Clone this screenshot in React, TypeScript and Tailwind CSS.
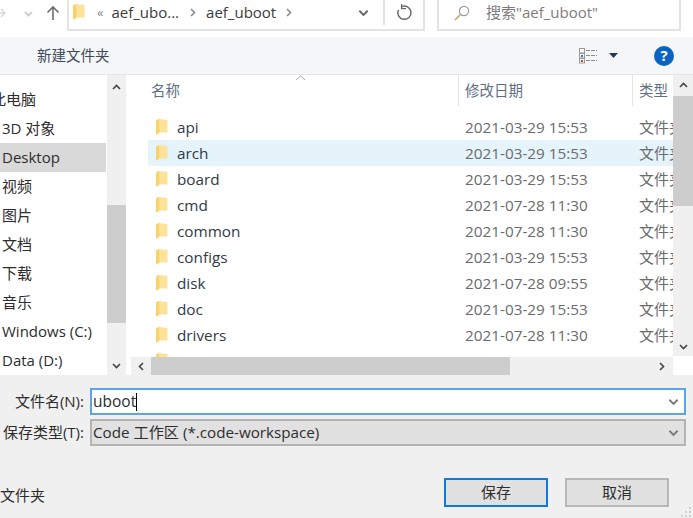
const font = { fontFamily: '"Open Sans", "Noto Sans CJK SC", sans-serif' };

const files = [
  ["api", "2021-03-29 15:53"],
  ["arch", "2021-03-29 15:53"],
  ["board", "2021-03-29 15:53"],
  ["cmd", "2021-07-28 11:30"],
  ["common", "2021-07-28 11:30"],
  ["configs", "2021-03-29 15:53"],
  ["disk", "2021-07-28 09:55"],
  ["doc", "2021-03-29 15:53"],
  ["drivers", "2021-07-28 11:30"],
  ["", ""],
];

const places = ["此电脑", "3D 对象", "Desktop", "视频", "图片", "文档", "下载", "音乐", "Windows (C:)", "Data (D:)"];

function Folder({ className = "" }: { className?: string }) {
  return (
    <svg width="12" height="17" viewBox="0 0 12 17" className={className}>
      <path d="M0 1.5 L3 0 L11.5 1 L11.5 13.5 L3 13.5 L1 15.5 L0 14.5 Z" fill="#fde39a" />
      <path d="M0 1.5 L3 0 L3.5 13.5 L1 15.5 L0 14.5 Z" fill="#f8d26c" />
    </svg>
  );
}

function Chevron({ dir, color = "#555", size = 11 }: { dir: "up" | "down" | "left" | "right"; color?: string; size?: number }) {
  const d = { up: "M2 7 L5.5 3.5 L9 7", down: "M2 4 L5.5 7.5 L9 4", left: "M7 2 L3.5 5.5 L7 9", right: "M4 2 L7.5 5.5 L4 9" }[dir];
  return (
    <svg width={size} height={size} viewBox="0 0 11 11" className="shrink-0">
      <path d={d} fill="none" stroke={color} strokeWidth="1.6" />
    </svg>
  );
}

function TopBar() {
  return (
    <div className="flex h-[37px] shrink-0 items-start bg-white text-[15px] text-[#3c3c3c]">
      {/* nav arrows */}
      <div className="flex h-[26px] w-[67px] shrink-0 items-center">
        <svg width="6" height="14" viewBox="0 0 6 14" className="shrink-0">
          <path d="M0 7 H5 M1 3 L5 7 L1 11" fill="none" stroke="#d8d8d8" strokeWidth="1.4" />
        </svg>
        <div className="ml-[17px]">
          <Chevron dir="down" color="#c4c4c4" />
        </div>
        <svg width="14" height="16" viewBox="0 0 14 16" className="ml-[12px] shrink-0">
          <path d="M7 15 V2 M1.5 7.5 L7 2 L12.5 7.5" fill="none" stroke="#6e6e6e" strokeWidth="1.6" />
        </svg>
      </div>

      {/* address */}
      <div className="flex h-[31px] w-[358px] shrink-0 items-center border-b-2 border-l-2 border-r-2 border-[#e3e3e3] pb-[4px]">
        <div className="ml-[4px] flex w-[24px] shrink-0">
          <Folder />
        </div>
        <span className="text-[13px] leading-none text-[#8a8a8a]">«</span>
        <span className="ml-[8px]">aef_ubo...</span>
        <div className="ml-[8px]">
          <Chevron dir="right" color="#8a8a8a" />
        </div>
        <span className="ml-[8px]">aef_uboot</span>
        <div className="ml-[7px]">
          <Chevron dir="right" color="#8a8a8a" />
        </div>
        <div className="ml-auto mr-[13px]">
          <Chevron dir="down" color="#666" size={13} />
        </div>
        <div className="flex h-full w-[40px] shrink-0 items-center justify-center border-l-2 border-[#e3e3e3]">
          <svg width="17" height="17" viewBox="0 0 17 17">
            <path d="M6 2.6 A6.6 6.6 0 1 1 2.4 6" fill="none" stroke="#6a6a6a" strokeWidth="1.5" />
            <path d="M5.6 0 V4.6 H10" fill="none" stroke="#6a6a6a" strokeWidth="1.4" />
          </svg>
        </div>
      </div>

      {/* search */}
      <div className="ml-[12px] flex h-[31px] w-[244px] shrink-0 items-center border-b-2 border-l-2 border-r-2 border-[#e3e3e3] pb-[4px] text-[#7d7d7d]">
        <svg width="16" height="16" viewBox="0 0 16 16" className="ml-[15px] shrink-0">
          <circle cx="10" cy="6" r="4.6" fill="none" stroke="#9a9a9a" strokeWidth="1.2" />
          <path d="M6.6 9.4 L1 15" stroke="#c8a878" strokeWidth="1.6" />
        </svg>
        <span className="ml-[16px] text-[15px]">搜索"aef_uboot"</span>
      </div>
    </div>
  );
}

function Toolbar() {
  return (
    <div className="flex h-[38px] shrink-0 items-center border-b border-[#e6e6e6] bg-[#f5f6f7]">
      <span className="ml-[37px] text-[14.5px] text-[#3d4a5c]">新建文件夹</span>
      <svg width="18" height="16" viewBox="0 0 18 16" className="ml-auto shrink-0">
        <rect x="0.5" y="0.5" width="5" height="4.5" fill="none" stroke="#9a9a9a" />
        <rect x="0.5" y="5.5" width="5" height="4.5" fill="none" stroke="#9a9a9a" />
        <rect x="0.5" y="10.5" width="5" height="4.5" fill="none" stroke="#9a9a9a" />
        <rect x="2" y="7" width="2" height="2" fill="#4a6fa8" />
        <rect x="2" y="12" width="2" height="2" fill="#c44a3a" />
        <path d="M7 2.5 H18 M7 7.5 H18 M7 12.5 H18" stroke="#8c8c8c" strokeDasharray="4 1" />
      </svg>
      <svg width="9" height="5" viewBox="0 0 9 5" className="ml-[12px] shrink-0">
        <path d="M0 0 H9 L4.5 5 Z" fill="#1f3a5f" />
      </svg>
      <div className="ml-[36px] mr-[19px] flex h-[20px] w-[20px] shrink-0 items-center justify-center rounded-full bg-[#0a63c0] text-[15px] font-bold leading-none text-white">
        ?
      </div>
    </div>
  );
}

function Sidebar() {
  return (
    <div className="flex w-[127px] shrink-0">
      <div className="flex w-[107px] shrink-0 flex-col overflow-hidden bg-white pt-[10px] text-[15px] text-[#2d2d2d]">
        {places.map((p, i) => (
          <div
            key={p}
            className={`flex h-[29px] shrink-0 items-center whitespace-nowrap ${i === 0 ? "-ml-[9px]" : "pl-[2px]"} ${
              p === "Desktop" ? "mr-[1px] bg-[#d9d9d9]" : ""
            }`}
          >
            {p}
          </div>
        ))}
      </div>
      <div className="flex w-[19px] shrink-0 flex-col bg-[#f0f0f0]">
        <div className="flex h-[18px] shrink-0 items-center justify-center pt-[6px]">
          <Chevron dir="up" color="#444" />
        </div>
        <div className="mt-[112px] h-[118px] w-full shrink-0 bg-[#cdcdcd]" />
        <div className="mt-auto flex h-[18px] shrink-0 items-center justify-center pb-[2px]">
          <Chevron dir="down" color="#444" />
        </div>
      </div>
    </div>
  );
}

function FileList() {
  return (
    <div className="relative flex min-w-0 flex-1 flex-col bg-white">
      <div className="relative flex h-[31px] shrink-0 items-center text-[14.5px] text-[#5f6f82]">
        <span className="ml-[24px] w-[307px] shrink-0">名称</span>
        <span className="flex h-full w-[174px] shrink-0 items-center border-l border-[#e5e5e5] pl-[6px]">修改日期</span>
        <span className="flex h-full min-w-0 flex-1 items-center border-l border-[#e5e5e5] pl-[6px]">类型</span>
        <div className="absolute left-[168px] top-0">
          <svg width="11" height="6" viewBox="0 0 11 6">
            <path d="M1 5 L5.5 1 L10 5" fill="none" stroke="#a8a8a8" />
          </svg>
        </div>
      </div>
      <div className="mt-[8px] flex-1 overflow-hidden">
        {files.map(([name, date], i) => (
          <div
            key={i}
            className={`ml-[21px] flex h-[26px] items-center overflow-hidden whitespace-nowrap text-[15.3px] ${
              name === "arch" ? "bg-[#e5f3fb]" : ""
            }`}
          >
            <Folder className="ml-[8px] shrink-0" />
            <span className="ml-[9px] w-[288px] shrink-0 text-[#2f3b47]">{name}</span>
            <span className="w-[174px] shrink-0 text-[#6b6b6b]">{date}</span>
            {name && <span className="text-[15px] text-[#6b6b6b]">文件夹</span>}
          </div>
        ))}
      </div>
      <div className="ml-[4px] flex h-[18px] shrink-0 items-center bg-[#f0f0f0]">
        <div className="flex w-[20px] shrink-0 justify-center">
          <Chevron dir="left" color="#444" />
        </div>
        <div className="h-full w-[359px] shrink-0 bg-[#cdcdcd]" />
        <div className="ml-auto mr-[6px]">
          <Chevron dir="right" color="#444" />
        </div>
      </div>
    </div>
  );
}

function MainScrollbar() {
  return (
    <div className="flex w-[20px] shrink-0 flex-col bg-white">
      <div className="flex flex-1 flex-col bg-[#f0f0f0]">
        <div className="flex h-[21px] shrink-0 items-center justify-center">
          <Chevron dir="up" color="#444" />
        </div>
        <div className="h-[110px] shrink-0 bg-[#cdcdcd]" />
        <div className="mt-auto flex h-[20px] shrink-0 items-center justify-center">
          <Chevron dir="down" color="#444" />
        </div>
      </div>
      <div className="h-[19px] shrink-0" />
    </div>
  );
}

function BottomPanel() {
  return (
    <div className="relative flex flex-1 flex-col bg-[#f0f0f0] text-[15px] text-[#2d2d2d]">
      <div className="mt-[13px] flex h-[27px] items-center">
        <span className="w-[90px] shrink-0 pr-[6px] text-right">文件名(N):</span>
        <div className="flex h-full w-[596px] shrink-0 items-center border-2 border-[#5aa5e6] bg-white pl-[1px] text-[15.5px]">
          <span>uboot</span>
          <span className="h-[18px] w-px bg-black" />
          <div className="ml-auto mr-[4px]">
            <Chevron dir="down" color="#7a7a7a" size={13} />
          </div>
        </div>
      </div>
      <div className="mt-[4px] flex h-[27px] items-center">
        <span className="w-[90px] shrink-0 whitespace-nowrap pr-[6px] text-right">保存类型(T):</span>
        <div className="flex h-full w-[596px] shrink-0 items-center border-2 border-[#b4b4b4] bg-[#e1e1e1] pl-[1px] text-[15.2px]">
          <span>Code 工作区 (*.code-workspace)</span>
          <div className="ml-auto mr-[4px]">
            <Chevron dir="down" color="#7a7a7a" size={13} />
          </div>
        </div>
      </div>
      <div className="mt-[32px] flex h-[29px] items-center">
        <span className="mt-[6px]">文件夹</span>
        <button className="ml-auto h-[29px] w-[104px] border-2 border-[#0d7bd8] bg-[#e1e1e1] text-[15px]">保存</button>
        <button className="ml-[17px] mr-[24px] h-[29px] w-[104px] border-2 border-[#b8b8b8] bg-[#e1e1e1] text-[15px]">取消</button>
      </div>
      <svg width="11" height="11" viewBox="0 0 11 11" className="absolute bottom-[1px] right-[1px]">
        <path d="M8 1 h2 v2 h-2 z M4 5 h2 v2 h-2 z M8 5 h2 v2 h-2 z M0 9 h2 v2 h-2 z M4 9 h2 v2 h-2 z M8 9 h2 v2 h-2 z" fill="#d0d0d0" />
      </svg>
    </div>
  );
}

export default function App() {
  return (
    <div className="flex h-[518px] w-[693px] flex-col overflow-hidden bg-white" style={font}>
      <TopBar />
      <Toolbar />
      <div className="flex h-[300px] shrink-0">
        <Sidebar />
        <FileList />
        <MainScrollbar />
      </div>
      <BottomPanel />
    </div>
  );
}
